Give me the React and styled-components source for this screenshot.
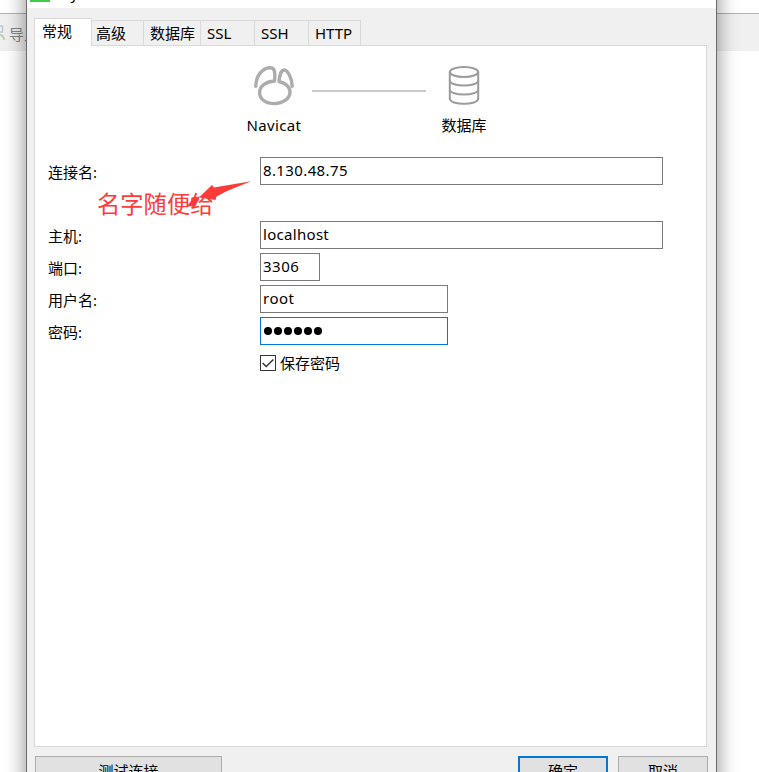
import React, { useState } from 'react';
import styled, { createGlobalStyle } from 'styled-components';

const tabs = [
  { name: '常规', width: 58, pad: 7 },
  { name: '高级', width: 52, pad: 4 },
  { name: '数据库', width: 57, pad: 6 },
  { name: 'SSL', width: 54, pad: 6 },
  { name: 'SSH', width: 54, pad: 6 },
  { name: 'HTTP', width: 52, pad: 6 },
];

export default function App() {
  const [active, setActive] = useState('常规');
  const [saved, setSaved] = useState(true);
  return (
    <Desktop>
      <GlobalStyle />
      <ToolBar>
        <ImportIcon />
        <span>导入</span>
      </ToolBar>
      <Dialog>
        <TitleBar>
          <TitleIcon />
          <Title>My</Title>
        </TitleBar>
        <TabBar>
          {tabs.map(tab => (
            <Tab key={tab.name} $active={tab.name === active} $width={tab.width} $pad={tab.pad} onClick={() => setActive(tab.name)}>
              {tab.name}
            </Tab>
          ))}
        </TabBar>
        <Panel>
          <Diagram>
            <DiagramItem $width={80}>
              <NavicatIcon />
              <Caption $spacing="0.35px">Navicat</Caption>
            </DiagramItem>
            <Link />
            <DiagramItem $width={76}>
              <DatabaseIcon />
              <Caption>数据库</Caption>
            </DiagramItem>
          </Diagram>
          <Row $gap={36}>
            <Label>连接名:</Label>
            <Input $width={403} $spacing="0.38px" defaultValue="8.130.48.75" />
            <Note>名字随便给</Note>
            <Arrow />
          </Row>
          <Row>
            <Label>主机:</Label>
            <Input $width={403} $spacing="0.3px" defaultValue="localhost" />
          </Row>
          <Row>
            <Label>端口:</Label>
            <Input $width={60} $spacing="0.5px" defaultValue="3306" />
          </Row>
          <Row>
            <Label>用户名:</Label>
            <Input $width={188} $spacing="0.5px" defaultValue="root" />
          </Row>
          <Row>
            <Label>密码:</Label>
            <Password>
              {[0, 1, 2, 3, 4, 5].map(i => <Dot key={i} />)}
            </Password>
          </Row>
          <SaveRow onClick={() => setSaved(!saved)}>
            <CheckBox>
              {saved && (
                <svg width="14" height="14" viewBox="0 0 14 14">
                  <path d="M1.6 7 L5.2 10.6 L12.4 3.4" fill="none" stroke="#333" strokeWidth="1.4" />
                </svg>
              )}
            </CheckBox>
            <SaveText>保存密码</SaveText>
          </SaveRow>
        </Panel>
        <Footer>
          <Button $width={187}>测试连接</Button>
          <Actions>
            <Button $width={90} $primary>确定</Button>
            <Button $width={90}>取消</Button>
          </Actions>
        </Footer>
      </Dialog>
    </Desktop>
  );
}

const ImportIcon = () => (
  <svg width="6" height="18" viewBox="0 0 6 18">
    <path d="M0 2 H2.5 V8 H0" fill="none" stroke="#b9c9d2" strokeWidth="1.5" />
    <path d="M0 11 Q3.8 11.5 4 16" fill="none" stroke="#b9d2b2" strokeWidth="2" />
  </svg>
);

const NavicatIcon = () => (
  <svg width="44" height="42" viewBox="0 0 44 42">
    <g fill="none" stroke="#acacac" strokeWidth="3.4" strokeLinecap="round" strokeLinejoin="round">
      <path d="M3.8 21.2 C3.8 11 10.5 2.8 18 2.8 C23 2.8 23.2 7 22.6 16 C14.5 16.5 7.6 20.5 7.6 27.5 C7.6 34.5 14 38.6 22.5 38.6 C31 38.6 38 33.5 38 27 C38 21.5 33.5 18.2 27 16.5 C27.5 10.5 29.5 5 32.3 5 C35.5 5 40.2 13.5 40.2 21.2" />
    </g>
  </svg>
);

const DatabaseIcon = () => (
  <svg width="34" height="42" viewBox="0 0 34 42">
    <g fill="none" stroke="#9b9b9b" strokeWidth="2">
      <ellipse cx="17" cy="7" rx="14.2" ry="5" />
      <path d="M2.8 7 V33.5 C2.8 40.6 31.2 40.6 31.2 33.5 V7" />
      <path d="M2.8 15.5 C2.8 22.3 31.2 22.3 31.2 15.5" />
      <path d="M2.8 24.5 C2.8 31.3 31.2 31.3 31.2 24.5" />
    </g>
  </svg>
);

const Arrow = () => (
  <ArrowSvg width="64" height="30" viewBox="0 0 64 30">
    <path d="M64 1.2 L27 7.5 L25 5 L12 17.5 L28.5 20 L29.5 16.5 L40 11 Z" fill="#fc3b39" />
    <path d="M13 16.5 L4.5 17.5 L4 21 L0 26.5 L8.5 26 L9 22 Z" fill="#fc3b39" />
  </ArrowSvg>
);

const GlobalStyle = createGlobalStyle`
body {
  margin: 0;
  background: #fff;
  overflow: hidden;
}
* {
  box-sizing: border-box;
}
body, input, button {
  font-family: "Noto Sans", "Noto Sans CJK SC", sans-serif;
  font-size: 15px;
  color: #000;
}
`;

const Desktop = styled.div`
  position: relative;
  width: 759px;
  height: 772px;
  padding-top: 13px;
  overflow: hidden;
  background: #fff;
`;

const ToolBar = styled.div`
  display: flex;
  align-items: center;
  gap: 3px;
  height: 38px;
  padding-top: 1px;
  border-top: 1px solid #b2b2b2;
  background: #f0f0f0;
  color: #858585;
  white-space: nowrap;
`;

const Dialog = styled.div`
  position: absolute;
  top: -30px;
  left: 26px;
  width: 691px;
  height: 850px;
  border: 1px solid #6c6c6c;
  background: #f0f0f0;
  box-shadow: 0 0 19px 1px rgba(0, 0, 0, 0.42);
`;

const TitleBar = styled.div`
  display: flex;
  align-items: flex-end;
  height: 37px;
  background: #fff;
`;

const TitleIcon = styled.div`
  width: 20px;
  height: 20px;
  margin: 0 0 6px 3px;
  background: #3ecb45;
`;

const Title = styled.div`
  margin: 0 0 5px 7px;
  line-height: 20px;
`;

const TabBar = styled.div`
  display: flex;
  align-items: flex-end;
  height: 37px;
  padding-left: 7px;
`;

const Tab = styled.div`
  position: relative;
  z-index: ${props => props.$active ? 1 : 0};
  width: ${props => props.$width}px;
  height: ${props => props.$active ? 28 : 25}px;
  margin-bottom: ${props => props.$active ? -1 : 0}px;
  padding-left: ${props => props.$pad}px;
  border: 1px solid #d9d9d9;
  border-bottom: none;
  border-left-width: ${props => props.$active ? 1 : 0}px;
  background: ${props => props.$active ? '#fff' : '#f0f0f0'};
  line-height: ${props => props.$active ? 25 : 25}px;
  white-space: nowrap;
`;

const Panel = styled.div`
  width: 673px;
  height: 702px;
  margin-left: 7px;
  padding: 18px 13px 0;
  border: 1px solid #d9d9d9;
  background: #fff;
`;

const Diagram = styled.div`
  display: flex;
  padding-left: 186px;
  height: 93px;
`;

const DiagramItem = styled.div`
  display: flex;
  flex-direction: column;
  align-items: center;
  width: ${props => props.$width}px;
  padding-top: 1px;
`;

const Caption = styled.div`
  margin-top: 8px;
  line-height: 20px;
  letter-spacing: ${props => props.$spacing || 'normal'};
`;

const Link = styled.div`
  width: 114px;
  height: 2px;
  margin: 26px 0 0 -2px;
  background: #c9c9c9;
`;

const Row = styled.div`
  position: relative;
  display: flex;
  height: 28px;
  margin-bottom: ${props => props.$gap || 4}px;
`;

const Label = styled.label`
  width: 212px;
  line-height: 31px;
`;

const Input = styled.input`
  width: ${props => props.$width}px;
  height: 28px;
  padding: 0 2px 3px;
  border: 1px solid #7a7a7a;
  border-radius: 0;
  outline: none;
  letter-spacing: ${props => props.$spacing || 'normal'};
`;

const Password = styled.div`
  display: flex;
  align-items: center;
  gap: 2px;
  width: 188px;
  height: 28px;
  padding: 0 3px;
  border: 1px solid #0078d7;
`;

const Dot = styled.i`
  width: 8px;
  height: 8px;
  border-radius: 50%;
  background: #000;
`;

const Note = styled.div`
  position: absolute;
  top: 32px;
  left: 49px;
  color: #fc3b39;
  font-size: 23.3px;
  line-height: 30px;
  white-space: nowrap;
`;

const ArrowSvg = styled.svg`
  position: absolute;
  top: 23px;
  left: 139px;
`;

const SaveRow = styled.div`
  display: flex;
  align-items: center;
  gap: 4px;
  height: 28px;
  margin-left: 212px;
`;

const SaveText = styled.span`
  padding-bottom: 1px;
  line-height: 20px;
`;

const CheckBox = styled.div`
  display: flex;
  width: 16px;
  height: 16px;
  border: 1px solid #333;
`;

const Footer = styled.div`
  display: flex;
  justify-content: space-between;
  padding: 9px 8px 0;
`;

const Actions = styled.div`
  display: flex;
  gap: 10px;
`;

const Button = styled.button`
  width: ${props => props.$width}px;
  height: 30px;
  padding: 0 0 2px;
  border: ${props => props.$primary ? '2px solid #0078d7' : '1px solid #adadad'};
  background: #e1e1e1;
`;
